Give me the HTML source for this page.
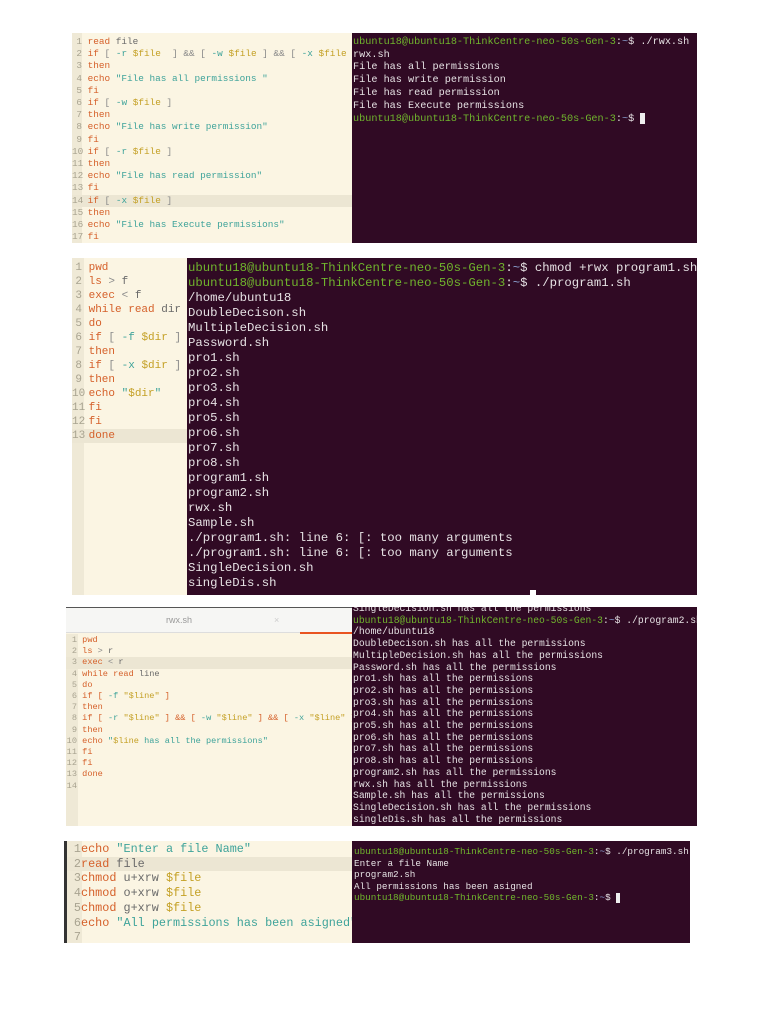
<!DOCTYPE html>
<html><head><meta charset="utf-8"><style>
*{margin:0;padding:0;box-sizing:border-box}
body{width:768px;height:1024px;background:#fff;position:relative;overflow:hidden;font-family:"Liberation Mono",monospace}
.p{position:absolute;overflow:hidden}
.p div{white-space:pre}
.ed{background:#fbf5e3;color:#6a6a6a}
.g{position:absolute;top:0;bottom:0;left:0;background:#efe9d6}
.t{background:#300a24;color:#e6e2e4}
.ln{display:inline-block;text-align:right;color:#a8a390}
.k{color:#d5602a}.s{color:#3ea39a}.v{color:#c4a025}.o{color:#8a8a8a}.b{color:#d5602a}
.pr{color:#70b52d}.bl{color:#8aa0d0}
.hl{background:#ece6d3}
.cur{display:inline-block;background:#eee;vertical-align:middle}
</style></head><body>

<!-- Panel 1 -->
<div class="p ed" style="left:72px;top:33px;width:280px;height:210px;font-size:9.4px;line-height:12.2px;padding-top:3px"><div class="g" style="width:10px"></div><div style="position:relative;white-space:normal"><div><span class="ln" style="width:10px">1</span> <span class="k">read</span> file</div><div><span class="ln" style="width:10px">2</span> <span class="k">if</span> <span class="o">[</span> <span class="s">-r</span> <span class="v">$file</span>  <span class="o">] &amp;&amp; [</span> <span class="s">-w</span> <span class="v">$file</span> <span class="o">] &amp;&amp; [</span> <span class="s">-x</span> <span class="v">$file</span></div><div><span class="ln" style="width:10px">3</span> <span class="k">then</span></div><div><span class="ln" style="width:10px">4</span> <span class="k">echo</span> <span class="s">"File has all permissions "</span></div><div><span class="ln" style="width:10px">5</span> <span class="k">fi</span></div><div><span class="ln" style="width:10px">6</span> <span class="k">if</span> <span class="o">[</span> <span class="s">-w</span> <span class="v">$file</span> <span class="o">]</span></div><div><span class="ln" style="width:10px">7</span> <span class="k">then</span></div><div><span class="ln" style="width:10px">8</span> <span class="k">echo</span> <span class="s">"File has write permission"</span></div><div><span class="ln" style="width:10px">9</span> <span class="k">fi</span></div><div><span class="ln" style="width:10px">10</span> <span class="k">if</span> <span class="o">[</span> <span class="s">-r</span> <span class="v">$file</span> <span class="o">]</span></div><div><span class="ln" style="width:10px">11</span> <span class="k">then</span></div><div><span class="ln" style="width:10px">12</span> <span class="k">echo</span> <span class="s">"File has read permission"</span></div><div><span class="ln" style="width:10px">13</span> <span class="k">fi</span></div><div class="hl"><span class="ln" style="width:10px">14</span> <span class="k">if</span> <span class="o">[</span> <span class="s">-x</span> <span class="v">$file</span> <span class="o">]</span></div><div><span class="ln" style="width:10px">15</span> <span class="k">then</span></div><div><span class="ln" style="width:10px">16</span> <span class="k">echo</span> <span class="s">"File has Execute permissions"</span></div><div><span class="ln" style="width:10px">17</span> <span class="k">fi</span></div></div></div>
<div class="p t" style="left:352px;top:33px;width:345px;height:210px;font-size:10.2px;line-height:12.7px;padding-top:4px;padding-left:1px"><div><span class="pr">ubuntu18@ubuntu18-ThinkCentre-neo-50s-Gen-3</span>:<span class="bl">~</span>$ ./rwx.sh</div><div>rwx.sh</div><div>File has all permissions</div><div>File has write permission</div><div>File has read permission</div><div>File has Execute permissions</div><div><span class="pr">ubuntu18@ubuntu18-ThinkCentre-neo-50s-Gen-3</span>:<span class="bl">~</span>$ <span class="cur" style="width:5px;height:11px"></span></div></div>

<!-- Panel 2 -->
<div class="p ed" style="left:72px;top:258px;width:115px;height:337px;font-size:11px;line-height:14px;padding-top:3px"><div class="g" style="width:12px"></div><div style="position:relative;white-space:normal"><div><span class="ln" style="width:10px">1</span> <span class="k">pwd</span></div><div><span class="ln" style="width:10px">2</span> <span class="k">ls</span> <span class="o">&gt;</span> f</div><div><span class="ln" style="width:10px">3</span> <span class="k">exec</span> <span class="o">&lt;</span> f</div><div><span class="ln" style="width:10px">4</span> <span class="k">while read</span> dir</div><div><span class="ln" style="width:10px">5</span> <span class="k">do</span></div><div><span class="ln" style="width:10px">6</span> <span class="k">if</span> <span class="o">[</span> <span class="s">-f</span> <span class="v">$dir</span> <span class="o">]</span></div><div><span class="ln" style="width:10px">7</span> <span class="k">then</span></div><div><span class="ln" style="width:10px">8</span> <span class="k">if</span> <span class="o">[</span> <span class="s">-x</span> <span class="v">$dir</span> <span class="o">]</span></div><div><span class="ln" style="width:10px">9</span> <span class="k">then</span></div><div><span class="ln" style="width:10px">10</span> <span class="k">echo</span> <span class="s">"</span><span class="v">$dir</span><span class="s">"</span></div><div><span class="ln" style="width:10px">11</span> <span class="k">fi</span></div><div><span class="ln" style="width:10px">12</span> <span class="k">fi</span></div><div class="hl"><span class="ln" style="width:10px">13</span> <span class="k">done</span></div></div></div>
<div class="p t" style="left:187px;top:258px;width:510px;height:337px;font-size:12.3px;line-height:15px;padding-top:3px;padding-left:1px"><div><span class="pr">ubuntu18@ubuntu18-ThinkCentre-neo-50s-Gen-3</span>:<span class="bl">~</span>$ chmod +rwx program1.sh</div><div><span class="pr">ubuntu18@ubuntu18-ThinkCentre-neo-50s-Gen-3</span>:<span class="bl">~</span>$ ./program1.sh</div><div>/home/ubuntu18</div><div>DoubleDecison.sh</div><div>MultipleDecision.sh</div><div>Password.sh</div><div>pro1.sh</div><div>pro2.sh</div><div>pro3.sh</div><div>pro4.sh</div><div>pro5.sh</div><div>pro6.sh</div><div>pro7.sh</div><div>pro8.sh</div><div>program1.sh</div><div>program2.sh</div><div>rwx.sh</div><div>Sample.sh</div><div>./program1.sh: line 6: [: too many arguments</div><div>./program1.sh: line 6: [: too many arguments</div><div>SingleDecision.sh</div><div>singleDis.sh</div></div>
<div class="p" style="left:530px;top:590px;width:6px;height:5px;background:#fff"></div>

<!-- Panel 3 -->
<div class="p" style="left:66px;top:607px;width:286px;height:219px;background:#fbf5e3"><div style="position:absolute;left:0;top:0;width:286px;height:26px;background:#f6f6f4;border-top:1px solid #555;border-bottom:1px solid #ddd;font-family:'Liberation Sans',sans-serif;font-size:9px;color:#999;text-align:center;line-height:25px"><span style="position:absolute;left:100px">rwx.sh</span><span style="position:absolute;left:208px;color:#ccc">×</span></div><div style="position:absolute;left:234px;top:25px;width:52px;height:2px;background:#e95420"></div><div class="g" style="top:27px;width:12px"></div><div class="ed" style="position:absolute;top:27px;left:0;width:286px;font-size:8.6px;line-height:11.2px;padding-top:1px;background:transparent;white-space:normal"><div><span class="ln" style="width:11px">1</span> <span class="k">pwd</span></div><div><span class="ln" style="width:11px">2</span> <span class="k">ls</span> <span class="o">&gt;</span> r</div><div class="hl"><span class="ln" style="width:11px">3</span> <span class="k">exec</span> <span class="o">&lt;</span> r</div><div><span class="ln" style="width:11px">4</span> <span class="k">while read</span> line</div><div><span class="ln" style="width:11px">5</span> <span class="k">do</span></div><div><span class="ln" style="width:11px">6</span> <span class="k">if</span> <span class="b">[</span> <span class="s">-f</span> <span class="v">"$line"</span> <span class="b">]</span></div><div><span class="ln" style="width:11px">7</span> <span class="k">then</span></div><div><span class="ln" style="width:11px">8</span> <span class="k">if</span> <span class="b">[</span> <span class="s">-r</span> <span class="v">"$line"</span> <span class="b">] &amp;&amp; [</span> <span class="s">-w</span> <span class="v">"$line"</span> <span class="b">] &amp;&amp; [</span> <span class="s">-x</span> <span class="v">"$line"</span> <span class="b">]</span></div><div><span class="ln" style="width:11px">9</span> <span class="k">then</span></div><div><span class="ln" style="width:11px">10</span> <span class="k">echo</span> <span class="s">"</span><span class="v">$line</span><span class="s"> has all the permissions"</span></div><div><span class="ln" style="width:11px">11</span> <span class="k">fi</span></div><div><span class="ln" style="width:11px">12</span> <span class="k">fi</span></div><div><span class="ln" style="width:11px">13</span> <span class="k">done</span></div><div><span class="ln" style="width:11px">14</span></div></div></div>
<div class="p t" style="left:352px;top:603px;width:345px;height:223px;font-size:9.7px;line-height:11.7px;padding-left:1px"><div>SingleDecision.sh has all the permissions</div><div><span class="pr">ubuntu18@ubuntu18-ThinkCentre-neo-50s-Gen-3</span>:<span class="bl">~</span>$ ./program2.sh</div><div>/home/ubuntu18</div><div>DoubleDecison.sh has all the permissions</div><div>MultipleDecision.sh has all the permissions</div><div>Password.sh has all the permissions</div><div>pro1.sh has all the permissions</div><div>pro2.sh has all the permissions</div><div>pro3.sh has all the permissions</div><div>pro4.sh has all the permissions</div><div>pro5.sh has all the permissions</div><div>pro6.sh has all the permissions</div><div>pro7.sh has all the permissions</div><div>pro8.sh has all the permissions</div><div>program2.sh has all the permissions</div><div>rwx.sh has all the permissions</div><div>Sample.sh has all the permissions</div><div>SingleDecision.sh has all the permissions</div><div>singleDis.sh has all the permissions</div></div>
<div class="p" style="left:352px;top:603px;width:345px;height:4px;background:#fff"></div>

<!-- Panel 4 -->
<div class="p ed" style="left:64px;top:841px;width:288px;height:102px;font-size:11.8px;line-height:14.7px;padding-top:1px;border-left:3px solid #333"><div class="g" style="width:15px"></div><div style="position:relative;white-space:normal"><div><span class="ln" style="width:14px">1</span><span class="k">echo</span> <span class="s">"Enter a file Name"</span></div><div class="hl"><span class="ln" style="width:14px">2</span><span class="k">read</span> file</div><div><span class="ln" style="width:14px">3</span><span class="k">chmod</span> u+xrw <span class="v">$file</span></div><div><span class="ln" style="width:14px">4</span><span class="k">chmod</span> o+xrw <span class="v">$file</span></div><div><span class="ln" style="width:14px">5</span><span class="k">chmod</span> g+xrw <span class="v">$file</span></div><div><span class="ln" style="width:14px">6</span><span class="k">echo</span> <span class="s">"All permissions has been asigned"</span></div><div><span class="ln" style="width:14px">7</span></div></div></div>
<div class="p t" style="left:352px;top:841px;width:338px;height:102px;font-size:9.3px;line-height:11.6px;padding-top:5px;padding-left:2px"><div><span class="pr">ubuntu18@ubuntu18-ThinkCentre-neo-50s-Gen-3</span>:<span class="bl">~</span>$ ./program3.sh</div><div>Enter a file Name</div><div>program2.sh</div><div>All permissions has been asigned</div><div><span class="pr">ubuntu18@ubuntu18-ThinkCentre-neo-50s-Gen-3</span>:<span class="bl">~</span>$ <span class="cur" style="width:4px;height:10px"></span></div></div>

</body></html>
